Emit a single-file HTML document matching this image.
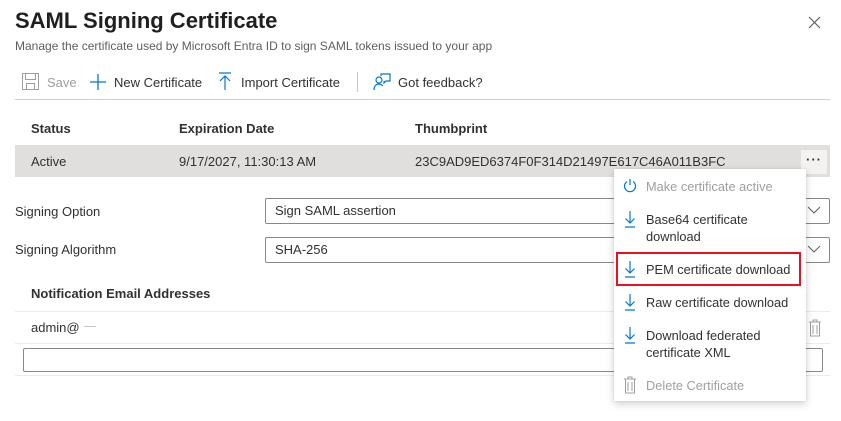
<!DOCTYPE html>
<html><head><meta charset="utf-8"><style>
*{margin:0;padding:0;box-sizing:border-box}
body{width:841px;height:421px;background:#fff;font-family:"Liberation Sans",sans-serif;font-size:13px;color:#323130;position:relative;overflow:hidden}
.a{position:absolute;white-space:nowrap}
.b{font-weight:bold}
.line{position:absolute;height:1px;background:#edebe9}
.dd{position:absolute;border:1px solid #8a8886;border-radius:2px;height:26px;padding-left:9px;line-height:24px}
.mi{position:absolute;left:646px;color:#323130;line-height:17px;font-size:12.8px}
.ic{position:absolute;left:623px}
</style></head><body>
<div class="a b" style="left:15px;top:8px;font-size:22px;color:#201f1e">SAML Signing Certificate</div>
<div class="a" style="left:15px;top:39px;font-size:12px;color:#605e5c">Manage the certificate used by Microsoft Entra ID to sign SAML tokens issued to your app</div>
<svg class="a" style="left:22px;top:73px" width="17" height="17" viewBox="0 0 17 17" fill="none" stroke="#a19f9d"><rect x="0.5" y="0.5" width="16" height="16"/><rect x="3.5" y="0.5" width="10" height="6"/><rect x="4.5" y="10.5" width="8" height="6"/></svg>
<div class="a" style="left:47px;top:75px;color:#a19f9d">Save</div>
<svg class="a" style="left:90px;top:74px" width="16" height="16" stroke="#0078d4" stroke-width="1.3"><path d="M8 0V16M0 8H16"/></svg>
<div class="a" style="left:114px;top:75px">New Certificate</div>
<svg class="a" style="left:218px;top:72px" width="14" height="18" stroke="#0078d4" stroke-width="1.2" fill="none"><path d="M1 1H13M7 4V18M2 9L7 4L12 9"/></svg>
<div class="a" style="left:241px;top:75px">Import Certificate</div>
<div class="a" style="left:357px;top:72px;width:1px;height:20px;background:#c8c6c4"></div>
<svg class="a" style="left:373px;top:73px" width="18" height="18" stroke="#0078d4" stroke-width="1.2" fill="none"><circle cx="6" cy="7" r="3"/><path d="M1 17C1 13 3 11 6 11C8 11 9 12 10 13M8 3V1H17V8H13L11 10V8"/></svg>
<div class="a" style="left:398px;top:75px">Got feedback?</div>
<div class="line" style="left:15px;top:99px;width:815px;background:#d2d0ce"></div>
<div class="a b" style="left:31px;top:121px">Status</div>
<div class="a b" style="left:179px;top:121px">Expiration Date</div>
<div class="a b" style="left:415px;top:121px">Thumbprint</div>
<div class="a" style="left:15px;top:145px;width:815px;height:32px;background:#e1dfdd"></div>
<div class="a" style="left:31px;top:154px">Active</div>
<div class="a" style="left:179px;top:154px">9/17/2027, 11:30:13 AM</div>
<div class="a" style="left:415px;top:154px">23C9AD9ED6374F0F314D21497E617C46A011B3FC</div>
<div class="a" style="left:801px;top:150px;width:26px;height:24px;background:#f3f2f1;text-align:center;font-weight:bold;line-height:20px;letter-spacing:1px">···</div>
<div class="a" style="left:15px;top:204px">Signing Option</div>
<div class="dd" style="left:265px;top:198px;width:565px">Sign SAML assertion</div>
<div class="a" style="left:15px;top:242px">Signing Algorithm</div>
<div class="dd" style="left:265px;top:237px;width:565px">SHA-256</div>
<svg class="a" style="left:807px;top:205px" width="14" height="10" stroke="#605e5c" fill="none"><path d="M1 2L7 8L13 2"/></svg>
<svg class="a" style="left:807px;top:244px" width="14" height="10" stroke="#605e5c" fill="none"><path d="M1 2L7 8L13 2"/></svg>
<div class="a b" style="left:31px;top:286px">Notification Email Addresses</div>
<div class="line" style="left:15px;top:311px;width:815px"></div>
<div class="a" style="left:31px;top:320px">admin@</div>
<div class="a" style="left:84px;top:326px;width:12px;height:1px;background:#c8c6c4"></div>
<div class="line" style="left:15px;top:343px;width:815px"></div>
<div class="a" style="left:23px;top:348px;width:800px;height:24px;border:1px solid #8a8886;border-radius:2px"></div>
<div class="line" style="left:15px;top:375px;width:815px"></div>
<svg class="a" style="left:808px;top:319px" width="14" height="18" stroke="#a19f9d" fill="none"><path d="M1 3H13M5 3V1H9V3M2.5 3V17H11.5V3M5 6V15M9 6V15"/></svg>
<svg class="a" style="left:808px;top:16px" width="13" height="13" stroke="#605e5c" stroke-width="1.2"><path d="M1 1L12 12M12 1L1 12"/></svg>
<div class="a" style="left:614px;top:169px;width:192px;height:232px;background:#fff;box-shadow:0 3px 8px rgba(0,0,0,.18),0 0 2px rgba(0,0,0,.12)"></div>
<svg class="ic" style="top:178px" width="14" height="16" stroke="#0078d4" fill="none" stroke-width="1.2"><path d="M7 1V7M4 3.5A5.5 5.5 0 1 0 10 3.5"/></svg>
<div class="mi" style="top:178px;color:#a19f9d">Make certificate active</div>
<svg class="ic" style="top:211px" width="14" height="17" stroke="#0078d4" fill="none" stroke-width="1.2"><path d="M7 0V12M2.5 7.5L7 12L11.5 7.5M2 16H12"/></svg>
<div class="mi" style="top:211px">Base64 certificate<br>download</div>
<div class="a" style="left:616px;top:252px;width:185px;height:34px;border:2px solid #e81123"></div>
<svg class="ic" style="top:261px" width="14" height="17" stroke="#0078d4" fill="none" stroke-width="1.2"><path d="M7 0V12M2.5 7.5L7 12L11.5 7.5M2 16H12"/></svg>
<div class="mi" style="top:261px">PEM certificate download</div>
<svg class="ic" style="top:294px" width="14" height="17" stroke="#0078d4" fill="none" stroke-width="1.2"><path d="M7 0V12M2.5 7.5L7 12L11.5 7.5M2 16H12"/></svg>
<div class="mi" style="top:294px">Raw certificate download</div>
<svg class="ic" style="top:327px" width="14" height="17" stroke="#0078d4" fill="none" stroke-width="1.2"><path d="M7 0V12M2.5 7.5L7 12L11.5 7.5M2 16H12"/></svg>
<div class="mi" style="top:327px">Download federated<br>certificate XML</div>
<svg class="ic" style="top:376px" width="14" height="18" stroke="#a19f9d" fill="none"><path d="M1 3H13M5 3V1H9V3M2.5 3V17H11.5V3M5 6V15M9 6V15"/></svg>
<div class="mi" style="top:377px;color:#a19f9d">Delete Certificate</div>
</body></html>
